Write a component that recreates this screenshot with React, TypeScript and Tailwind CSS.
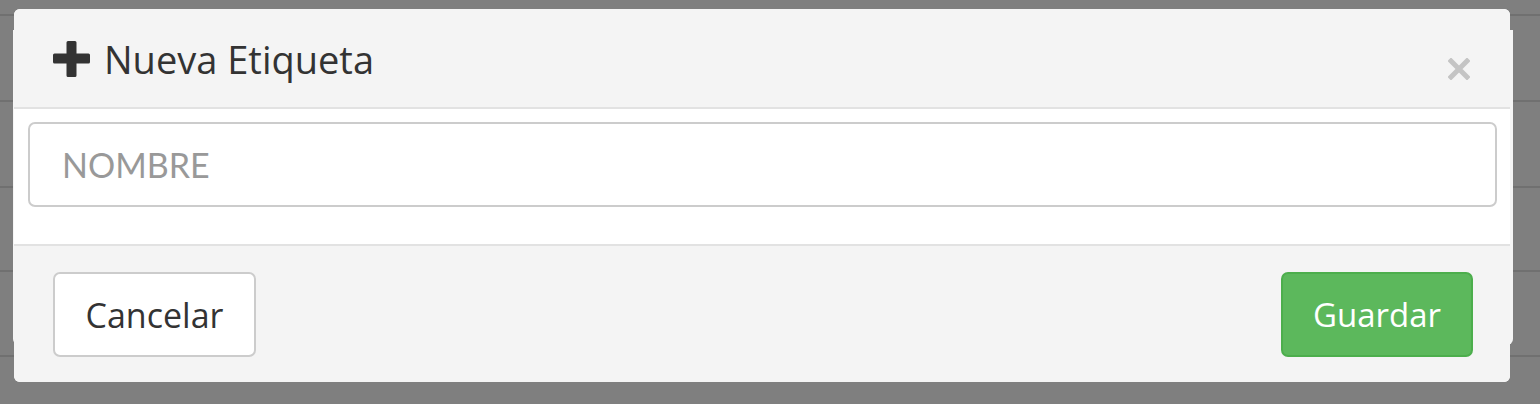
import React from "react";

export default function App() {
  const font = { fontFamily: '"Open Sans", "Noto Sans", sans-serif' };
  return (
    <div className="relative w-[1540px] h-[404px] overflow-hidden bg-[#7f7f7f]" style={font}>
      {/* table rows behind the overlay */}
      <div className="flex flex-col">
        <div className="h-[16px] border-b-2 border-[#707070]" />
        <div className="h-[86px] border-b-2 border-[#707070]" />
        <div className="h-[86px] border-b-2 border-[#707070]" />
        <div className="h-[84px] border-b-2 border-[#707070]" />
        <div className="h-[85px] border-b-2 border-[#707070]" />
      </div>

      {/* stacked panel behind */}
      <div className="absolute left-[13px] top-[30px] w-[1500px] h-[315px] rounded-b-[6px] bg-[#f5f5f5]" />

      {/* modal */}
      <div className="absolute left-[14px] top-[9px] w-[1496px] h-[373px] rounded-[6px] overflow-hidden bg-white flex flex-col">
        <div className="h-[100px] shrink-0 bg-[#f4f4f4] border-b-2 border-[#e2e2e2] flex items-center pl-[39px] pr-[40px]">
          <svg width="37" height="36" viewBox="0 0 37 36" className="mt-[2px]">
            <path
              d="M13.5 1.5 Q13.5 0 15 0 H22 Q23.5 0 23.5 1.5 V12.5 H35.5 Q37 12.5 37 14 V21 Q37 22.5 35.5 22.5 H23.5 V34.5 Q23.5 36 22 36 H15 Q13.5 36 13.5 34.5 V22.5 H1.5 Q0 22.5 0 21 V14 Q0 12.5 1.5 12.5 H13.5 Z"
              fill="#333"
            />
          </svg>
          <span className="ml-[14px] text-[38px] leading-none text-[#333] mt-[2px]">Nueva Etiqueta</span>
          <svg width="22" height="22" viewBox="0 0 22 22" className="ml-auto mt-[22px]">
            <path d="M3 3 L19 19 M19 3 L3 19" stroke="#c4c4c4" strokeWidth="5" strokeLinecap="square" />
          </svg>
        </div>
        <div className="h-[137px] shrink-0 bg-white border-b-2 border-[#e2e2e2] pl-[14px] pr-[13px] pt-[13px]">
          <div className="h-[85px] rounded-[7px] border-2 border-[#cccccc] bg-white flex items-center pl-[32px]">
            <span className="text-[34px] text-[#999] leading-none" style={{ fontFamily: 'Lato, "Open Sans", sans-serif' }}>
              NOMBRE
            </span>
          </div>
        </div>
        <div className="flex-1 bg-[#f4f4f4] flex items-start justify-between pt-[26px] pl-[39px] pr-[37px]">
          <div className="w-[203px] h-[85px] rounded-[7px] border-2 border-[#cccccc] bg-white flex items-center justify-center">
            <span className="text-[34px] text-[#333] leading-none">Cancelar</span>
          </div>
          <div className="w-[192px] h-[85px] rounded-[7px] border-2 border-[#4cae4c] bg-[#5cb85c] flex items-center justify-center">
            <span className="text-[33px] text-white leading-none">Guardar</span>
          </div>
        </div>
      </div>
    </div>
  );
}
